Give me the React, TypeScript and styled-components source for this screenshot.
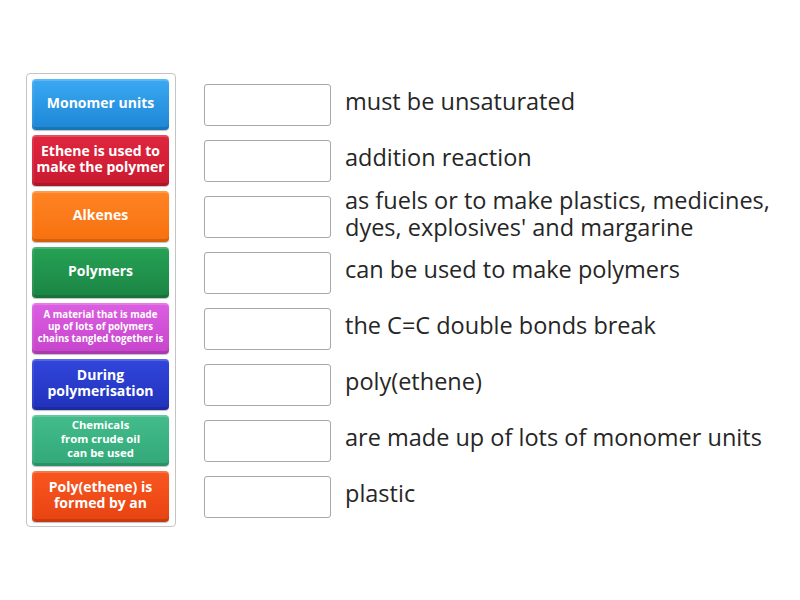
import React from "react";
import styled, { createGlobalStyle } from "styled-components";

const Global = createGlobalStyle`
  html, body { margin: 0; padding: 0; background: #ffffff; }
  body { font-family: "Open Sans", "Liberation Sans", sans-serif; }
`;

const Page = styled.div`
  width: 800px;
  height: 600px;
  box-sizing: border-box;
  padding: 73px 0 0 26px;
  display: flex;
  align-items: flex-start;
`;

const Panel = styled.div`
  width: 150px;
  box-sizing: border-box;
  border: 1px solid #c4c4c4;
  border-radius: 4px;
  padding: 5px 6px 4px 5px;
  display: flex;
  flex-direction: column;
  gap: 5px;
  background: #fff;
`;

const Tile = styled.div<{ $c1: string; $c2: string; $fs: number; $lh: number }>`
  height: 51px;
  box-sizing: border-box;
  border-radius: 4px;
  display: flex;
  align-items: center;
  justify-content: center;
  text-align: center;
  color: #fff;
  font-weight: 700;
  font-size: ${(p) => p.$fs}px;
  line-height: ${(p) => p.$lh}px;
  padding: 0 3px 4px;
  background: linear-gradient(to bottom, ${(p) => p.$c1}, ${(p) => p.$c2});
  box-shadow: inset 0 2px 0 rgba(255, 255, 255, 0.18),
    inset 2px 0 0 rgba(255, 255, 255, 0.08),
    inset 0 -3px 0 rgba(0, 0, 0, 0.14),
    0 1px 1px rgba(0, 0, 0, 0.25);
`;

const Answers = styled.div`
  margin-top: 6px;
  margin-left: 28px;
  display: flex;
  flex-direction: column;
  gap: 5px;
`;

const Row = styled.div`
  height: 51px;
  display: flex;
  align-items: center;
`;

const Slot = styled.div`
  width: 127px;
  height: 42px;
  box-sizing: border-box;
  border: 1px solid #a8a8a8;
  border-radius: 3px;
  background: #fff;
  flex-shrink: 0;
  margin-top: 1px;
`;

const Label = styled.div`
  margin-left: 14px;
  font-size: 23.5px;
  line-height: 27px;
  color: #262626;
  width: 450px;
  margin-top: -6px;
`;

const tiles = [
  { t: "Monomer units", c1: "#3aa9f2", c2: "#1d86d6", fs: 14, lh: 16 },
  { t: "Ethene is used to make the polymer", c1: "#e0263f", c2: "#c81a30", fs: 14, lh: 16 },
  { t: "Alkenes", c1: "#ff8424", c2: "#f7700e", fs: 14, lh: 16 },
  { t: "Polymers", c1: "#26a255", c2: "#1b8444", fs: 14, lh: 16 },
  { t: "A material that is made up of lots of polymers chains tangled together is", c1: "#dc5fe2", c2: "#c544cb", fs: 9.7, lh: 12 },
  { t: "During polymerisation", c1: "#3146dc", c2: "#2131bb", fs: 14, lh: 16 },
  { t: "Chemicals from crude oil can be used", c1: "#43bc8c", c2: "#33a878", fs: 11.3, lh: 14 },
  { t: "Poly(ethene) is formed by an", c1: "#f8561f", c2: "#e84312", fs: 14, lh: 16 },
];

const answers = [
  "must be unsaturated",
  "addition reaction",
  "as fuels or to make plastics, medicines, dyes, explosives' and margarine",
  "can be used to make polymers",
  "the C=C double bonds break",
  "poly(ethene)",
  "are made up of lots of monomer units",
  "plastic",
];

const breaks: Record<number, string[]> = {
  1: ["Ethene is used to", "make the polymer"],
  4: ["A material that is made", "up of lots of polymers", "chains tangled together is"],
  5: ["During", "polymerisation"],
  6: ["Chemicals", "from crude oil", "can be used"],
  7: ["Poly(ethene) is", "formed by an"],
};

export default function App() {
  return (
    <>
      <Global />
      <Page>
        <Panel>
          {tiles.map((x, i) => (
            <Tile key={i} $c1={x.c1} $c2={x.c2} $fs={x.fs} $lh={x.lh}>
              <div>
                {breaks[i]
                  ? breaks[i].map((l, j) => <div key={j}>{l}</div>)
                  : x.t}
              </div>
            </Tile>
          ))}
        </Panel>
        <Answers>
          {answers.map((a, i) => (
            <Row key={i}>
              <Slot />
              <Label>{a}</Label>
            </Row>
          ))}
        </Answers>
      </Page>
    </>
  );
}
